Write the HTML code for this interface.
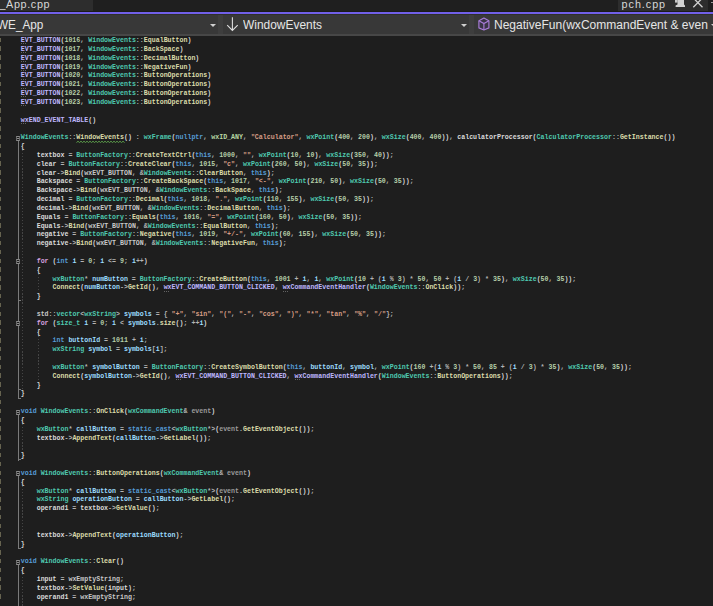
<!DOCTYPE html>
<html><head><meta charset="utf-8"><style>
html,body{margin:0;padding:0;}
body{width:713px;height:606px;overflow:hidden;background:#1e1e1e;position:relative;font-family:"Liberation Sans",sans-serif;}
.abs{position:absolute;}
#tabs{position:absolute;left:0;top:0;width:713px;height:12px;background:#1f1f1f;overflow:hidden;}
.tab{position:absolute;top:0;height:11px;background:#2d2d2d;overflow:hidden;}
.tabtxt{position:absolute;white-space:pre;color:#d8d8d8;font-size:10.8px;line-height:12px;letter-spacing:0.95px;}
#accent{position:absolute;left:0;top:12px;width:713px;height:2px;background:#7160e8;}
#nav{position:absolute;left:0;top:14px;width:713px;height:22px;background:#3e3e3e;}
.navbot{position:absolute;left:0;top:19.5px;width:713px;height:2.5px;background:#474747;}
.navtop{position:absolute;left:0;top:0;width:713px;height:1px;background:#2f2f2c;}
#tabline{position:absolute;left:0;top:11px;width:713px;height:1px;background:#1a1a1a;}
.dd{position:absolute;top:1px;height:18.5px;background:#383838;overflow:hidden;}
.ddtxt{position:absolute;white-space:pre;color:#e6e6e6;font-size:12.5px;line-height:13px;top:3.5px;transform-origin:0 0;}
.tri{position:absolute;top:9.2px;width:0;height:0;border-left:3px solid transparent;border-right:3px solid transparent;border-top:3px solid #d0d0d0;}
#code{position:absolute;left:0;top:36px;width:713px;height:570px;background:#1e1e1e;}
.ln{position:absolute;left:20.8px;white-space:pre;font-family:"Liberation Mono",monospace;font-size:6.617px;font-weight:bold;line-height:1;color:#dcdcdc;}
.m{color:#beb7ff} .t{color:#4ec9b0} .f{color:#dcdcaa} .n{color:#b5cea8} .s{color:#d69d85}
.k{color:#569cd6} .c{color:#d8a0df} .l{color:#9cdcfe} .p{color:#9a9a9a} .v{color:#dadada}
.o{color:#b4b4b4} .e{color:#b8d7a3} .b{color:#d4d4d4} .g{color:#c8c8c8}
.obox{position:absolute;left:16px;width:4px;height:5px;box-sizing:border-box;border:1px solid #8a8a8a;border-left-color:#6a6a6a;border-right-color:#6a6a6a;background:#1e1e1e;}
.obox:after{content:"";position:absolute;left:0px;top:1px;width:2px;height:1px;background:#8a8a8a;}
.oline{position:absolute;left:18px;width:1px;background:#7a7a7a;}
.otick{position:absolute;left:18px;width:2.5px;height:1px;background:#7a7a7a;}
.guide{position:absolute;width:1px;background:repeating-linear-gradient(to bottom,#454545 0,#454545 1.2px,transparent 1.2px,transparent 3.05px);}
.dots{position:absolute;width:6px;height:1px;background:repeating-linear-gradient(to right,#636363 0,#636363 1px,transparent 1px,transparent 2.2px);}
.lnr{position:absolute;left:0;width:1.2px;height:4.5px;background:#66634f;}
</style></head><body>
<div id="tabs">
  <div class="tab" style="left:0;width:93px"><div class="tabtxt" style="left:-0.6px;top:-1.6px;letter-spacing:0.65px">_App.cpp</div></div>
  <div class="tab" style="left:618px;width:90px"><div class="tabtxt" style="left:3.6px;top:-1.6px">pch.cpp</div>
    <svg class="abs" style="left:0;top:0" width="90" height="11" viewBox="0 0 90 11">
      <path d="M59.5 -1 H66 V4.6 L67 5.6 V7 H57.6 V5.6 L59.5 4.6 Z" fill="#d2d2d2"/>
      <path d="M57 -1 H59.6 V2.6 H57 Z" fill="#c8c8c8"/>
      <path d="M75.3 -2 L84.5 7.2 M84.5 -2 L75.3 7.2" stroke="#d2d2d2" stroke-width="1.3" fill="none"/>
    </svg>
  </div>
  <div class="abs" style="left:711px;top:2px;width:2px;height:1px;background:#9a9a9a"></div>
</div>
<div id="tabline"></div>
<div id="accent"></div>
<div id="nav">
  <div class="navtop"></div><div class="navbot"></div>
  <div class="dd" style="left:0;width:218px"><div class="ddtxt" style="left:-2.6px;transform:scaleX(0.94)">WE_App</div><div class="tri" style="left:210px"></div></div>
  <div class="dd" style="left:223px;width:246px">
    <svg class="abs" style="left:0;top:0" width="20" height="19" viewBox="0 0 20 19">
      <path d="M9.4 2.3 V15.5 M4.2 10.2 L9.4 15.5 L14.7 10.2" stroke="#dedede" stroke-width="1.1" fill="none"/>
    </svg>
    <div class="ddtxt" style="left:20.4px;transform:scaleX(0.955)">WindowEvents</div><div class="tri" style="left:238px"></div></div>
  <div class="dd" style="left:474px;width:239px">
    <svg class="abs" style="left:0;top:0" width="20" height="19" viewBox="0 0 20 19">
      <path d="M9.9 3.1 L14.9 5.8 V12.9 L9.9 15.0 L4.9 12.9 V5.8 Z" fill="#3a3446" stroke="#a87cd8" stroke-width="1.15" stroke-linejoin="round"/>
      <path d="M4.9 5.8 L9.9 8.6 L14.9 5.8 M9.9 8.6 V15.0" stroke="#a87cd8" stroke-width="1.15" fill="none"/>
    </svg>
    <div class="ddtxt" style="left:20.0px;transform:scaleX(0.962)">NegativeFun(wxCommandEvent &amp; even</div><div class="tri" style="left:237px"></div></div>
</div>
<div id="code">
</div>
<div class="lnr" style="top:37.6px"></div>
<div class="lnr" style="top:46.4px"></div>
<div class="lnr" style="top:55.3px"></div>
<div class="lnr" style="top:64.1px"></div>
<div class="lnr" style="top:72.9px"></div>
<div class="lnr" style="top:81.8px"></div>
<div class="lnr" style="top:90.6px"></div>
<div class="lnr" style="top:99.4px"></div>
<div class="lnr" style="top:108.3px"></div>
<div class="lnr" style="top:117.1px"></div>
<div class="lnr" style="top:126.0px"></div>
<div class="lnr" style="top:134.8px"></div>
<div class="lnr" style="top:143.6px"></div>
<div class="lnr" style="top:152.5px"></div>
<div class="lnr" style="top:161.3px"></div>
<div class="lnr" style="top:170.1px"></div>
<div class="lnr" style="top:179.0px"></div>
<div class="lnr" style="top:187.8px"></div>
<div class="lnr" style="top:196.6px"></div>
<div class="lnr" style="top:205.5px"></div>
<div class="lnr" style="top:214.3px"></div>
<div class="lnr" style="top:223.1px"></div>
<div class="lnr" style="top:232.0px"></div>
<div class="lnr" style="top:240.8px"></div>
<div class="lnr" style="top:249.6px"></div>
<div class="lnr" style="top:258.5px"></div>
<div class="lnr" style="top:267.3px"></div>
<div class="lnr" style="top:276.1px"></div>
<div class="lnr" style="top:285.0px"></div>
<div class="lnr" style="top:293.8px"></div>
<div class="lnr" style="top:302.6px"></div>
<div class="lnr" style="top:311.5px"></div>
<div class="lnr" style="top:320.3px"></div>
<div class="lnr" style="top:329.2px"></div>
<div class="lnr" style="top:338.0px"></div>
<div class="lnr" style="top:346.8px"></div>
<div class="lnr" style="top:355.7px"></div>
<div class="lnr" style="top:364.5px"></div>
<div class="lnr" style="top:373.3px"></div>
<div class="lnr" style="top:382.2px"></div>
<div class="lnr" style="top:391.0px"></div>
<div class="lnr" style="top:399.8px"></div>
<div class="lnr" style="top:408.7px"></div>
<div class="lnr" style="top:417.5px"></div>
<div class="lnr" style="top:426.3px"></div>
<div class="lnr" style="top:435.2px"></div>
<div class="lnr" style="top:444.0px"></div>
<div class="lnr" style="top:452.8px"></div>
<div class="lnr" style="top:461.7px"></div>
<div class="lnr" style="top:470.5px"></div>
<div class="lnr" style="top:479.4px"></div>
<div class="lnr" style="top:488.2px"></div>
<div class="lnr" style="top:497.0px"></div>
<div class="lnr" style="top:505.9px"></div>
<div class="lnr" style="top:514.7px"></div>
<div class="lnr" style="top:523.5px"></div>
<div class="lnr" style="top:532.4px"></div>
<div class="lnr" style="top:541.2px"></div>
<div class="lnr" style="top:550.0px"></div>
<div class="lnr" style="top:558.9px"></div>
<div class="lnr" style="top:567.7px"></div>
<div class="lnr" style="top:576.5px"></div>
<div class="lnr" style="top:585.4px"></div>
<div class="lnr" style="top:594.2px"></div>
<div class="guide" style="left:22.4px;top:150.3px;height:238.7px"></div>
<div class="guide" style="left:38.3px;top:273.9px;height:17.8px"></div>
<div class="guide" style="left:38.3px;top:335.8px;height:44.3px"></div>
<div class="guide" style="left:22.4px;top:424.1px;height:26.7px"></div>
<div class="guide" style="left:22.4px;top:486.0px;height:53.2px"></div>
<div class="guide" style="left:22.4px;top:574.3px;height:31.7px"></div>
<div class="obox" style="top:135.6px"></div>
<div class="oline" style="top:140.6px;height:258.0px"></div><div class="otick" style="top:397.6px"></div>
<div class="obox" style="top:259.3px"></div>
<div class="oline" style="top:264.3px;height:37.1px"></div><div class="otick" style="top:300.4px"></div>
<div class="obox" style="top:321.1px"></div>
<div class="oline" style="top:326.1px;height:63.6px"></div><div class="otick" style="top:388.8px"></div>
<div class="obox" style="top:409.5px"></div>
<div class="oline" style="top:414.5px;height:46.0px"></div><div class="otick" style="top:459.4px"></div>
<div class="obox" style="top:471.3px"></div>
<div class="oline" style="top:476.3px;height:72.5px"></div><div class="otick" style="top:547.8px"></div>
<div class="obox" style="top:559.7px"></div>
<div class="oline" style="top:564.7px;height:41.3px"></div>
<div class="ln" style="top:37.00px"><span class="m">EVT_BUTTON</span><span class="b">(</span><span class="n">1016</span><span class="o">, </span><span class="t">WindowEvents</span><span class="o">::</span><span class="f">EqualButton</span><span class="b">)</span></div>
<div class="ln" style="top:45.84px"><span class="m">EVT_BUTTON</span><span class="b">(</span><span class="n">1017</span><span class="o">, </span><span class="t">WindowEvents</span><span class="o">::</span><span class="f">BackSpace</span><span class="b">)</span></div>
<div class="ln" style="top:54.67px"><span class="m">EVT_BUTTON</span><span class="b">(</span><span class="n">1018</span><span class="o">, </span><span class="t">WindowEvents</span><span class="o">::</span><span class="f">DecimalButton</span><span class="b">)</span></div>
<div class="ln" style="top:63.51px"><span class="m">EVT_BUTTON</span><span class="b">(</span><span class="n">1019</span><span class="o">, </span><span class="t">WindowEvents</span><span class="o">::</span><span class="f">NegativeFun</span><span class="b">)</span></div>
<div class="ln" style="top:72.34px"><span class="m">EVT_BUTTON</span><span class="b">(</span><span class="n">1020</span><span class="o">, </span><span class="t">WindowEvents</span><span class="o">::</span><span class="f">ButtonOperations</span><span class="b">)</span></div>
<div class="ln" style="top:81.17px"><span class="m">EVT_BUTTON</span><span class="b">(</span><span class="n">1021</span><span class="o">, </span><span class="t">WindowEvents</span><span class="o">::</span><span class="f">ButtonOperations</span><span class="b">)</span></div>
<div class="ln" style="top:90.01px"><span class="m">EVT_BUTTON</span><span class="b">(</span><span class="n">1022</span><span class="o">, </span><span class="t">WindowEvents</span><span class="o">::</span><span class="f">ButtonOperations</span><span class="b">)</span></div>
<div class="ln" style="top:98.84px"><span class="m">EVT_BUTTON</span><span class="b">(</span><span class="n">1023</span><span class="o">, </span><span class="t">WindowEvents</span><span class="o">::</span><span class="f">ButtonOperations</span><span class="b">)</span></div>
<div class="ln" style="top:116.52px"><span class="m">wxEND_EVENT_TABLE</span><span class="b">()</span></div>
<div class="ln" style="top:134.19px"><span class="t">WindowEvents</span><span class="o">::</span><span class="f">WindowEvents</span><span class="b">()</span><span class="o"> : </span><span class="t">wxFrame</span><span class="b">(</span><span class="k">nullptr</span><span class="o">, </span><span class="e">wxID_ANY</span><span class="o">, </span><span class="s">&quot;Calculator&quot;</span><span class="o">, </span><span class="t">wxPoint</span><span class="b">(</span><span class="n">400</span><span class="o">, </span><span class="n">200</span><span class="b">)</span><span class="o">, </span><span class="t">wxSize</span><span class="b">(</span><span class="n">400</span><span class="o">, </span><span class="n">400</span><span class="b">))</span><span class="o">, </span><span class="v">calculatorProcessor</span><span class="b">(</span><span class="t">CalculatorProcessor</span><span class="o">::</span><span class="f">GetInstance</span><span class="b">())</span></div>
<div class="ln" style="top:143.02px"><span class="b">{</span></div>
<div class="ln" style="top:151.86px">    <span class="v">textbox</span><span class="o"> = </span><span class="t">ButtonFactory</span><span class="o">::</span><span class="f">CreateTextCtrl</span><span class="b">(</span><span class="k">this</span><span class="o">, </span><span class="n">1000</span><span class="o">, </span><span class="s">&quot;&quot;</span><span class="o">, </span><span class="t">wxPoint</span><span class="b">(</span><span class="n">10</span><span class="o">, </span><span class="n">10</span><span class="b">)</span><span class="o">, </span><span class="t">wxSize</span><span class="b">(</span><span class="n">350</span><span class="o">, </span><span class="n">40</span><span class="b">))</span><span class="o">;</span></div>
<div class="ln" style="top:160.69px">    <span class="v">clear</span><span class="o"> = </span><span class="t">ButtonFactory</span><span class="o">::</span><span class="f">CreateClear</span><span class="b">(</span><span class="k">this</span><span class="o">, </span><span class="n">1015</span><span class="o">, </span><span class="s">&quot;c&quot;</span><span class="o">, </span><span class="t">wxPoint</span><span class="b">(</span><span class="n">260</span><span class="o">, </span><span class="n">50</span><span class="b">)</span><span class="o">, </span><span class="t">wxSize</span><span class="b">(</span><span class="n">50</span><span class="o">, </span><span class="n">35</span><span class="b">))</span><span class="o">;</span></div>
<div class="ln" style="top:169.53px">    <span class="v">clear</span><span class="o">-&gt;</span><span class="f">Bind</span><span class="b">(</span><span class="g">wxEVT_BUTTON</span><span class="o">, &amp;</span><span class="t">WindowEvents</span><span class="o">::</span><span class="f">ClearButton</span><span class="o">, </span><span class="k">this</span><span class="b">)</span><span class="o">;</span></div>
<div class="ln" style="top:178.36px">    <span class="v">Backspace</span><span class="o"> = </span><span class="t">ButtonFactory</span><span class="o">::</span><span class="f">CreateBackSpace</span><span class="b">(</span><span class="k">this</span><span class="o">, </span><span class="n">1017</span><span class="o">, </span><span class="s">&quot;&lt;-&quot;</span><span class="o">, </span><span class="t">wxPoint</span><span class="b">(</span><span class="n">210</span><span class="o">, </span><span class="n">50</span><span class="b">)</span><span class="o">, </span><span class="t">wxSize</span><span class="b">(</span><span class="n">50</span><span class="o">, </span><span class="n">35</span><span class="b">))</span><span class="o">;</span></div>
<div class="ln" style="top:187.20px">    <span class="v">Backspace</span><span class="o">-&gt;</span><span class="f">Bind</span><span class="b">(</span><span class="g">wxEVT_BUTTON</span><span class="o">, &amp;</span><span class="t">WindowEvents</span><span class="o">::</span><span class="f">BackSpace</span><span class="o">, </span><span class="k">this</span><span class="b">)</span><span class="o">;</span></div>
<div class="ln" style="top:196.03px">    <span class="v">decimal</span><span class="o"> = </span><span class="t">ButtonFactory</span><span class="o">::</span><span class="f">Decimal</span><span class="b">(</span><span class="k">this</span><span class="o">, </span><span class="n">1018</span><span class="o">, </span><span class="s">&quot;.&quot;</span><span class="o">, </span><span class="t">wxPoint</span><span class="b">(</span><span class="n">110</span><span class="o">, </span><span class="n">155</span><span class="b">)</span><span class="o">, </span><span class="t">wxSize</span><span class="b">(</span><span class="n">50</span><span class="o">, </span><span class="n">35</span><span class="b">))</span><span class="o">;</span></div>
<div class="ln" style="top:204.87px">    <span class="v">decimal</span><span class="o">-&gt;</span><span class="f">Bind</span><span class="b">(</span><span class="g">wxEVT_BUTTON</span><span class="o">, &amp;</span><span class="t">WindowEvents</span><span class="o">::</span><span class="f">DecimalButton</span><span class="o">, </span><span class="k">this</span><span class="b">)</span><span class="o">;</span></div>
<div class="ln" style="top:213.70px">    <span class="v">Equals</span><span class="o"> = </span><span class="t">ButtonFactory</span><span class="o">::</span><span class="f">Equals</span><span class="b">(</span><span class="k">this</span><span class="o">, </span><span class="n">1016</span><span class="o">, </span><span class="s">&quot;=&quot;</span><span class="o">, </span><span class="t">wxPoint</span><span class="b">(</span><span class="n">160</span><span class="o">, </span><span class="n">50</span><span class="b">)</span><span class="o">, </span><span class="t">wxSize</span><span class="b">(</span><span class="n">50</span><span class="o">, </span><span class="n">35</span><span class="b">))</span><span class="o">;</span></div>
<div class="ln" style="top:222.54px">    <span class="v">Equals</span><span class="o">-&gt;</span><span class="f">Bind</span><span class="b">(</span><span class="g">wxEVT_BUTTON</span><span class="o">, &amp;</span><span class="t">WindowEvents</span><span class="o">::</span><span class="f">EqualButton</span><span class="o">, </span><span class="k">this</span><span class="b">)</span><span class="o">;</span></div>
<div class="ln" style="top:231.37px">    <span class="v">negative</span><span class="o"> = </span><span class="t">ButtonFactory</span><span class="o">::</span><span class="f">Negative</span><span class="b">(</span><span class="k">this</span><span class="o">, </span><span class="n">1019</span><span class="o">, </span><span class="s">&quot;+/-&quot;</span><span class="o">, </span><span class="t">wxPoint</span><span class="b">(</span><span class="n">60</span><span class="o">, </span><span class="n">155</span><span class="b">)</span><span class="o">, </span><span class="t">wxSize</span><span class="b">(</span><span class="n">50</span><span class="o">, </span><span class="n">35</span><span class="b">))</span><span class="o">;</span></div>
<div class="ln" style="top:240.21px">    <span class="v">negative</span><span class="o">-&gt;</span><span class="f">Bind</span><span class="b">(</span><span class="g">wxEVT_BUTTON</span><span class="o">, &amp;</span><span class="t">WindowEvents</span><span class="o">::</span><span class="f">NegativeFun</span><span class="o">, </span><span class="k">this</span><span class="b">)</span><span class="o">;</span></div>
<div class="ln" style="top:257.88px">    <span class="c">for</span><span class="o"> </span><span class="b">(</span><span class="k">int</span><span class="o"> </span><span class="l">i</span><span class="o"> = </span><span class="n">0</span><span class="o">; </span><span class="l">i</span><span class="o"> &lt;= </span><span class="n">9</span><span class="o">; </span><span class="l">i</span><span class="o">++</span><span class="b">)</span></div>
<div class="ln" style="top:266.71px">    <span class="b">{</span></div>
<div class="ln" style="top:275.55px">        <span class="t">wxButton</span><span class="o">* </span><span class="l">numButton</span><span class="o"> = </span><span class="t">ButtonFactory</span><span class="o">::</span><span class="f">CreateButton</span><span class="b">(</span><span class="k">this</span><span class="o">, </span><span class="n">1001</span><span class="o"> + </span><span class="l">i</span><span class="o">, </span><span class="l">i</span><span class="o">, </span><span class="t">wxPoint</span><span class="b">(</span><span class="n">10</span><span class="o"> + (</span><span class="l">i</span><span class="o"> % </span><span class="n">3</span><span class="o">) * </span><span class="n">50</span><span class="o">, </span><span class="n">50</span><span class="o"> + (</span><span class="l">i</span><span class="o"> / </span><span class="n">3</span><span class="o">) * </span><span class="n">35</span><span class="b">)</span><span class="o">, </span><span class="t">wxSize</span><span class="b">(</span><span class="n">50</span><span class="o">, </span><span class="n">35</span><span class="b">))</span><span class="o">;</span></div>
<div class="ln" style="top:284.38px">        <span class="f">Connect</span><span class="b">(</span><span class="l">numButton</span><span class="o">-&gt;</span><span class="f">GetId</span><span class="b">()</span><span class="o">, </span><span class="m">wxEVT_COMMAND_BUTTON_CLICKED</span><span class="o">, </span><span class="m">wxCommandEventHandler</span><span class="b">(</span><span class="t">WindowEvents</span><span class="o">::</span><span class="f">OnClick</span><span class="b">))</span><span class="o">;</span></div>
<div class="ln" style="top:293.22px">    <span class="b">}</span></div>
<div class="ln" style="top:310.89px">    <span class="g">std</span><span class="o">::</span><span class="t">vector</span><span class="o">&lt;</span><span class="t">wxString</span><span class="o">&gt; </span><span class="l">symbols</span><span class="o"> = { </span><span class="s">&quot;+&quot;</span><span class="o">, </span><span class="s">&quot;sin&quot;</span><span class="o">, </span><span class="s">&quot;(&quot;</span><span class="o">, </span><span class="s">&quot;-&quot;</span><span class="o">, </span><span class="s">&quot;cos&quot;</span><span class="o">, </span><span class="s">&quot;)&quot;</span><span class="o">, </span><span class="s">&quot;*&quot;</span><span class="o">, </span><span class="s">&quot;tan&quot;</span><span class="o">, </span><span class="s">&quot;%&quot;</span><span class="o">, </span><span class="s">&quot;/&quot;</span><span class="o">};</span></div>
<div class="ln" style="top:319.72px">    <span class="c">for</span><span class="o"> </span><span class="b">(</span><span class="t">size_t</span><span class="o"> </span><span class="l">i</span><span class="o"> = </span><span class="n">0</span><span class="o">; </span><span class="l">i</span><span class="o"> &lt; </span><span class="l">symbols</span><span class="o">.</span><span class="f">size</span><span class="b">()</span><span class="o">; ++</span><span class="l">i</span><span class="b">)</span></div>
<div class="ln" style="top:328.56px">    <span class="b">{</span></div>
<div class="ln" style="top:337.39px">        <span class="k">int</span><span class="o"> </span><span class="l">buttonId</span><span class="o"> = </span><span class="n">1011</span><span class="o"> + </span><span class="l">i</span><span class="o">;</span></div>
<div class="ln" style="top:346.23px">        <span class="t">wxString</span><span class="o"> </span><span class="l">symbol</span><span class="o"> = </span><span class="l">symbols</span><span class="o">[</span><span class="l">i</span><span class="o">];</span></div>
<div class="ln" style="top:363.90px">        <span class="t">wxButton</span><span class="o">* </span><span class="l">symbolButton</span><span class="o"> = </span><span class="t">ButtonFactory</span><span class="o">::</span><span class="f">CreateSymbolButton</span><span class="b">(</span><span class="k">this</span><span class="o">, </span><span class="l">buttonId</span><span class="o">, </span><span class="l">symbol</span><span class="o">, </span><span class="t">wxPoint</span><span class="b">(</span><span class="n">160</span><span class="o"> +(</span><span class="l">i</span><span class="o"> % </span><span class="n">3</span><span class="o">) * </span><span class="n">50</span><span class="o">, </span><span class="n">85</span><span class="o"> + (</span><span class="l">i</span><span class="o"> / </span><span class="n">3</span><span class="o">) * </span><span class="n">35</span><span class="b">)</span><span class="o">, </span><span class="t">wxSize</span><span class="b">(</span><span class="n">50</span><span class="o">, </span><span class="n">35</span><span class="b">))</span><span class="o">;</span></div>
<div class="ln" style="top:372.73px">        <span class="f">Connect</span><span class="b">(</span><span class="l">symbolButton</span><span class="o">-&gt;</span><span class="f">GetId</span><span class="b">()</span><span class="o">, </span><span class="m">wxEVT_COMMAND_BUTTON_CLICKED</span><span class="o">, </span><span class="m">wxCommandEventHandler</span><span class="b">(</span><span class="t">WindowEvents</span><span class="o">::</span><span class="f">ButtonOperations</span><span class="b">))</span><span class="o">;</span></div>
<div class="ln" style="top:381.57px">    <span class="b">}</span></div>
<div class="ln" style="top:390.40px"><span class="b">}</span></div>
<div class="ln" style="top:408.07px"><span class="k">void</span><span class="o"> </span><span class="t">WindowEvents</span><span class="o">::</span><span class="f">OnClick</span><span class="b">(</span><span class="t">wxCommandEvent</span><span class="o">&amp; </span><span class="p">event</span><span class="b">)</span></div>
<div class="ln" style="top:416.91px"><span class="b">{</span></div>
<div class="ln" style="top:425.74px">    <span class="t">wxButton</span><span class="o">* </span><span class="l">callButton</span><span class="o"> = </span><span class="k">static_cast</span><span class="o">&lt;</span><span class="t">wxButton</span><span class="o">*&gt;</span><span class="b">(</span><span class="p">event</span><span class="o">.</span><span class="f">GetEventObject</span><span class="b">())</span><span class="o">;</span></div>
<div class="ln" style="top:434.58px">    <span class="v">textbox</span><span class="o">-&gt;</span><span class="f">AppendText</span><span class="b">(</span><span class="l">callButton</span><span class="o">-&gt;</span><span class="f">GetLabel</span><span class="b">())</span><span class="o">;</span></div>
<div class="ln" style="top:452.25px"><span class="b">}</span></div>
<div class="ln" style="top:469.92px"><span class="k">void</span><span class="o"> </span><span class="t">WindowEvents</span><span class="o">::</span><span class="f">ButtonOperations</span><span class="b">(</span><span class="t">wxCommandEvent</span><span class="o">&amp; </span><span class="p">event</span><span class="b">)</span></div>
<div class="ln" style="top:478.75px"><span class="b">{</span></div>
<div class="ln" style="top:487.59px">    <span class="t">wxButton</span><span class="o">* </span><span class="l">callButton</span><span class="o"> = </span><span class="k">static_cast</span><span class="o">&lt;</span><span class="t">wxButton</span><span class="o">*&gt;</span><span class="b">(</span><span class="p">event</span><span class="o">.</span><span class="f">GetEventObject</span><span class="b">())</span><span class="o">;</span></div>
<div class="ln" style="top:496.42px">    <span class="t">wxString</span><span class="o"> </span><span class="l">operationButton</span><span class="o"> = </span><span class="l">callButton</span><span class="o">-&gt;</span><span class="f">GetLabel</span><span class="b">()</span><span class="o">;</span></div>
<div class="ln" style="top:505.26px">    <span class="v">operand1</span><span class="o"> = </span><span class="v">textbox</span><span class="o">-&gt;</span><span class="f">GetValue</span><span class="b">()</span><span class="o">;</span></div>
<div class="ln" style="top:531.76px">    <span class="v">textbox</span><span class="o">-&gt;</span><span class="f">AppendText</span><span class="b">(</span><span class="l">operationButton</span><span class="b">)</span><span class="o">;</span></div>
<div class="ln" style="top:540.60px"><span class="b">}</span></div>
<div class="ln" style="top:558.27px"><span class="k">void</span><span class="o"> </span><span class="t">WindowEvents</span><span class="o">::</span><span class="f">Clear</span><span class="b">()</span></div>
<div class="ln" style="top:567.10px"><span class="b">{</span></div>
<div class="ln" style="top:575.94px">    <span class="v">input</span><span class="o"> = </span><span class="g">wxEmptyString</span><span class="o">;</span></div>
<div class="ln" style="top:584.77px">    <span class="v">textbox</span><span class="o">-&gt;</span><span class="f">SetValue</span><span class="b">(</span><span class="v">input</span><span class="b">)</span><span class="o">;</span></div>
<div class="ln" style="top:593.61px">    <span class="v">operand1</span><span class="o"> = </span><span class="g">wxEmptyString</span><span class="o">;</span></div>
<div class="dots" style="left:21.4px;top:43.4px"></div>
<div class="dots" style="left:21.4px;top:52.2px"></div>
<div class="dots" style="left:21.4px;top:61.1px"></div>
<div class="dots" style="left:21.4px;top:69.9px"></div>
<div class="dots" style="left:21.4px;top:78.7px"></div>
<div class="dots" style="left:21.4px;top:87.6px"></div>
<div class="dots" style="left:21.4px;top:96.4px"></div>
<div class="dots" style="left:21.4px;top:105.2px"></div>
<div class="dots" style="left:21.4px;top:122.9px"></div>
<div class="dots" style="left:164.3px;top:290.8px"></div>
<div class="dots" style="left:283.4px;top:290.8px"></div>
<div class="dots" style="left:176.2px;top:379.1px"></div>
<div class="dots" style="left:295.3px;top:379.1px"></div>
<svg class="abs" style="left:76px;top:139.5px" width="49" height="4" viewBox="0 0 49 4"><path d="M0.5 2.8 L2 1 L3.5 2.8 L5 1 L6.5 2.8 L8 1 L9.5 2.8 L11 1 L12.5 2.8 L14 1 L15.5 2.8 L17 1 L18.5 2.8 L20 1 L21.5 2.8 L23 1 L24.5 2.8 L26 1 L27.5 2.8 L29 1 L30.5 2.8 L32 1 L33.5 2.8 L35 1 L36.5 2.8 L38 1 L39.5 2.8 L41 1 L42.5 2.8 L44 1 L45.5 2.8 L47 1 L48.5 2.8" stroke="#5a9a4a" stroke-width="0.9" fill="none"/></svg>
</body></html>
